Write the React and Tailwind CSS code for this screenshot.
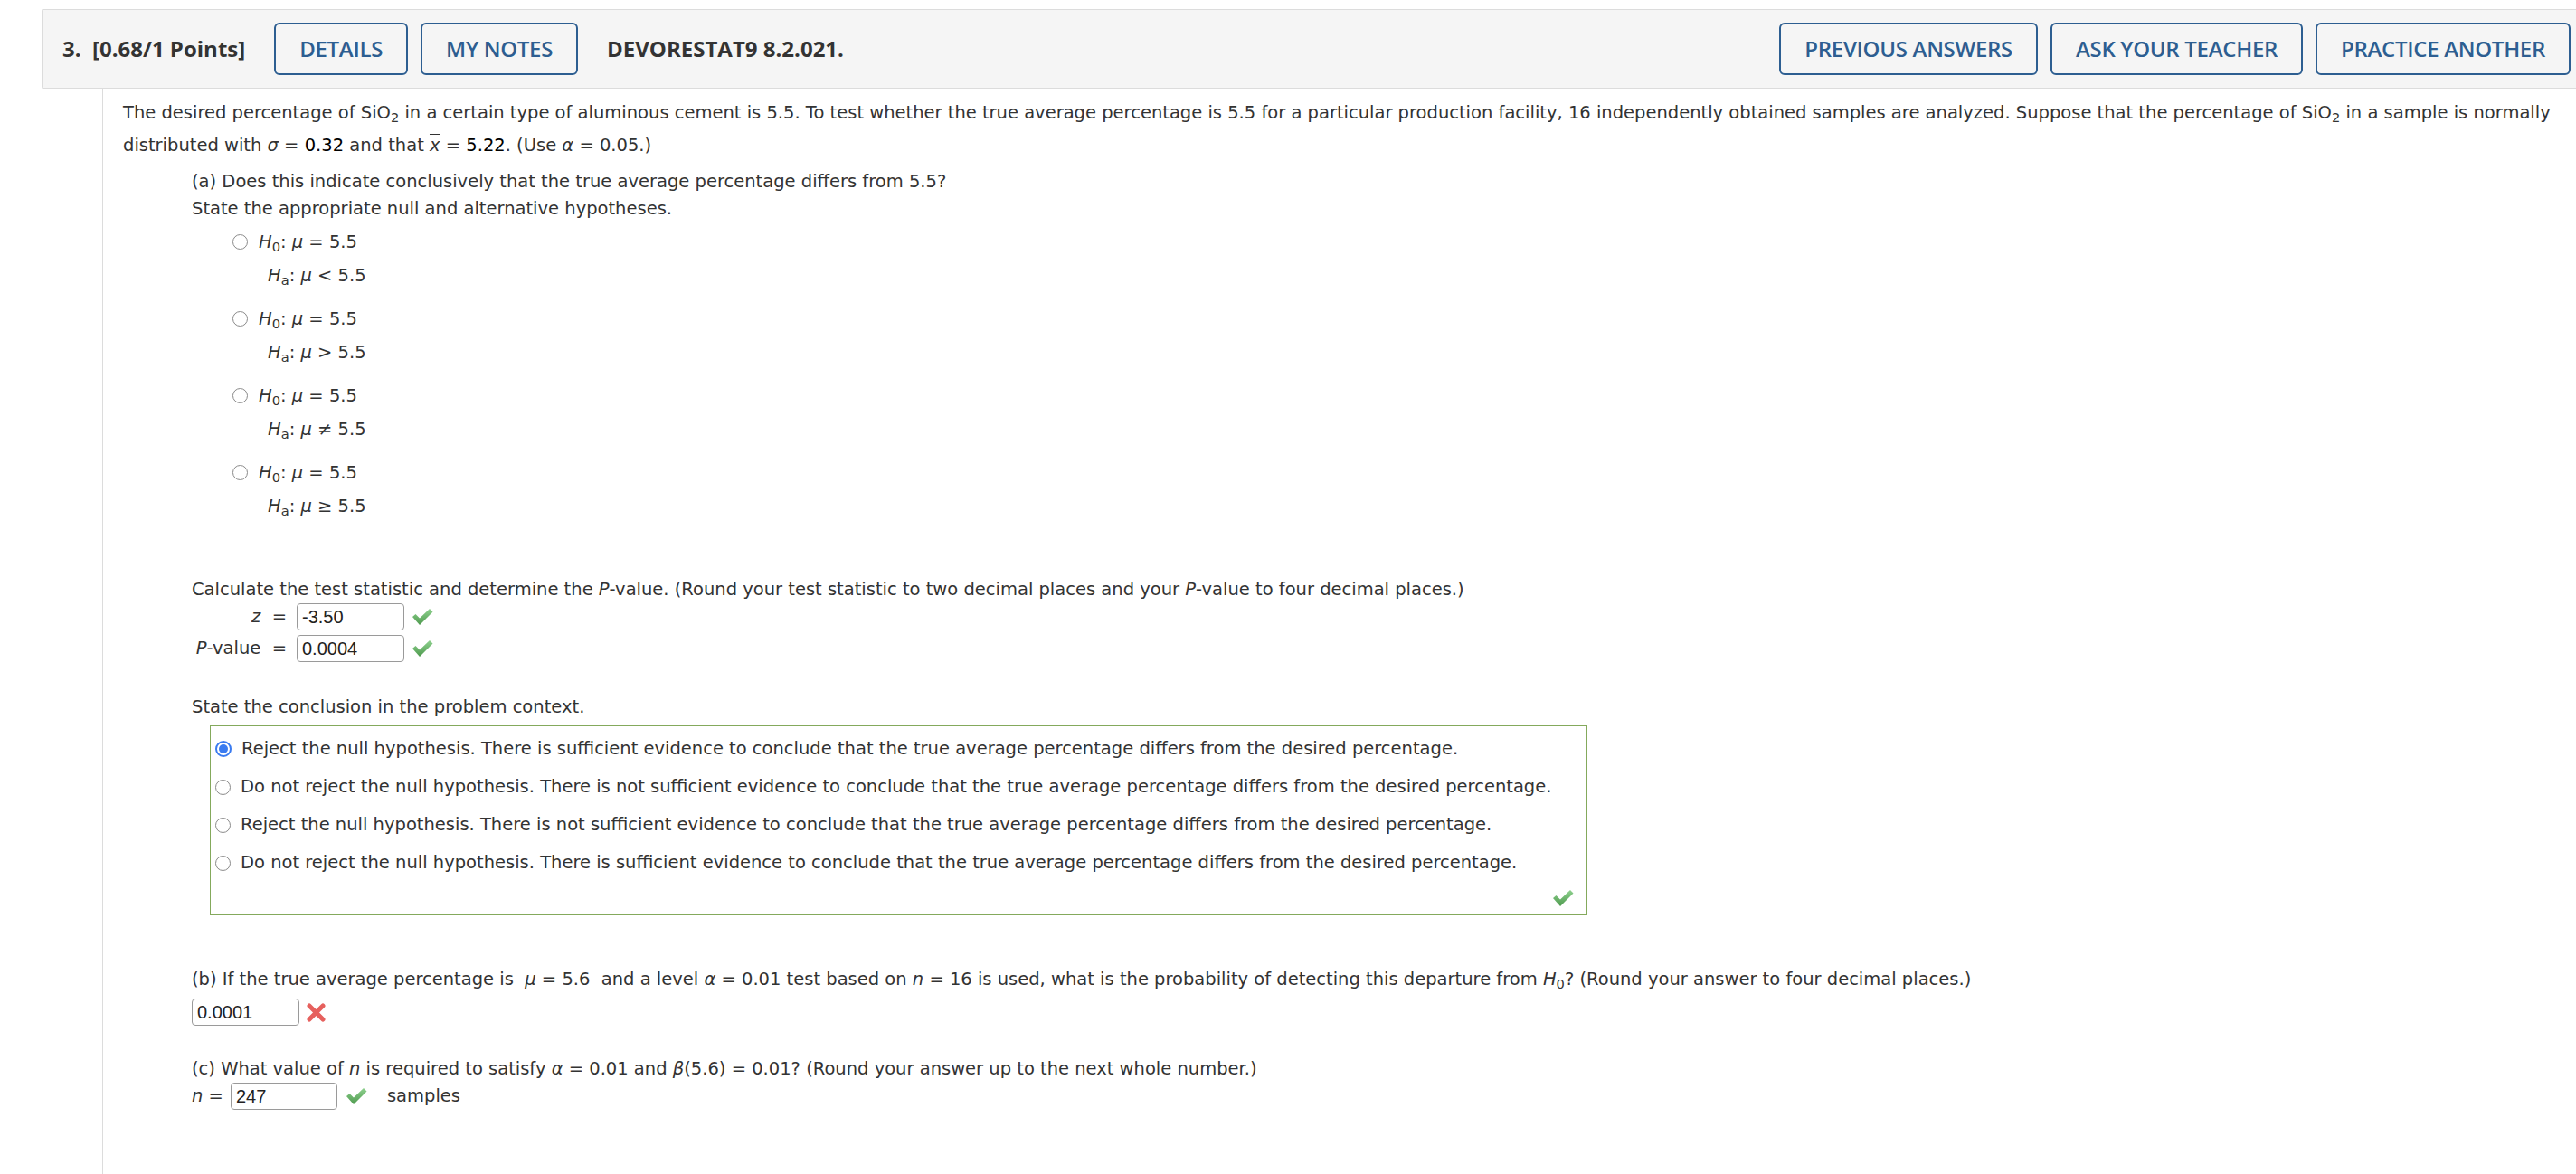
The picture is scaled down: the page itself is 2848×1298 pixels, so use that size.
import React from "react";

// header buttons share one look
function HeadButton({ children }) {
  return (
    <button className="h-[58px] px-[26px] border-2 border-[#2d5e91] rounded-[6px] text-[#2d5e91] text-[24px] font-semibold tracking-[-0.3px]">
      {children}
    </button>
  );
}

function Check() {
  return (
    <svg width="24" height="20" viewBox="0 0 24 20" className="shrink-0">
      <defs>
        <linearGradient id="chk" x1="0" y1="0" x2="0" y2="1">
          <stop offset="0" stopColor="#8fd18f" />
          <stop offset="1" stopColor="#4e9a4e" />
        </linearGradient>
      </defs>
      <polygon points="1,10 4.5,7 9,11.5 20,1 23.5,4.5 9,19" fill="url(#chk)" />
    </svg>
  );
}

function Cross() {
  return (
    <svg width="21" height="21" viewBox="0 0 21 21" className="shrink-0">
      <path d="M3 3 L18 18 M18 3 L3 18" stroke="#e6605d" strokeWidth="5" strokeLinecap="round" />
    </svg>
  );
}

function Radio({ checked }) {
  if (checked) {
    return (
      <span className="w-[18px] h-[18px] rounded-full border-2 border-[#3a7bf0] flex items-center justify-center shrink-0">
        <span className="w-[10px] h-[10px] rounded-full bg-[#3a7bf0]"></span>
      </span>
    );
  }
  return <span className="w-[17px] h-[17px] rounded-full border-[1.5px] border-[#8a8a8a] bg-white shrink-0"></span>;
}

function Answer({ value, w = "w-[119px]" }) {
  return (
    <div className={`${w} h-[30px] border border-[#9a9a9a] rounded-[4px] bg-white flex items-center pl-[5px] text-[20px] text-[#222] font-['Liberation_Sans',Arial,sans-serif]`}>
      {value}
    </div>
  );
}

const hypotheses = ["<", ">", "≠", "≥"];

const conclusions = [
  "Reject the null hypothesis. There is sufficient evidence to conclude that the true average percentage differs from the desired percentage.",
  "Do not reject the null hypothesis. There is not sufficient evidence to conclude that the true average percentage differs from the desired percentage.",
  "Reject the null hypothesis. There is not sufficient evidence to conclude that the true average percentage differs from the desired percentage.",
  "Do not reject the null hypothesis. There is sufficient evidence to conclude that the true average percentage differs from the desired percentage.",
];

export default function App() {
  return (
    <div className="min-h-[1298px] bg-white pt-[10px] text-[#333]">
      <header className="ml-[46px] h-[88px] bg-[#f5f5f5] border-y border-l border-[#dcdcdc] rounded-l-[2px] flex items-center pl-[22px] pr-[6px] font-['Open_Sans',sans-serif]">
        <span className="text-[24px] font-bold text-[#333]">3.&nbsp; [0.68/1 Points]</span>
        <div className="ml-[32px] flex gap-[14px]">
          <HeadButton>DETAILS</HeadButton>
          <HeadButton>MY NOTES</HeadButton>
        </div>
        <span className="ml-[32px] text-[24px] font-bold text-[#333]">DEVORESTAT9 8.2.021.</span>
        <div className="ml-auto flex gap-[14px]">
          <HeadButton>PREVIOUS ANSWERS</HeadButton>
          <HeadButton>ASK YOUR TEACHER</HeadButton>
          <HeadButton>PRACTICE ANOTHER</HeadButton>
        </div>
      </header>

      <main className="ml-[113px] border-l border-[#dcdcdc] min-h-[1200px] pl-[22px] pr-[14px] pt-[9px] text-[19.5px] font-['DejaVu_Sans',Verdana,sans-serif]">
        <p className="leading-[36px]">
          The desired percentage of SiO<sub>2</sub> in a certain type of aluminous cement is 5.5. To test whether the true
          average percentage is 5.5 for a particular production facility, 16 independently obtained samples are analyzed.
          Suppose that the percentage of SiO<sub>2</sub> in a sample is normally distributed with <i>σ</i> ={" "}
          <span className="text-black">0.32</span> and that <i className="overline">x</i> ={" "}
          <span className="text-black">5.22</span>. (Use <i>α</i> = 0.05.)
        </p>

        <div className="ml-[76px] mt-[7px]">
          <p className="leading-[30px]">(a) Does this indicate conclusively that the true average percentage differs from 5.5?</p>
          <p className="leading-[30px]">State the appropriate null and alternative hypotheses.</p>

          <div className="mt-[3px] ml-[45px] flex flex-col gap-[11px]">
            {hypotheses.map((sign) => (
              <div key={sign}>
                <div className="flex items-center h-[37px]">
                  <Radio />
                  <span className="ml-[12px]">
                    <i>H</i>
                    <sub>0</sub>: <i>μ</i> = 5.5
                  </span>
                </div>
                <div className="h-[37px] flex items-center pl-[39px]">
                  <span>
                    <i>H</i>
                    <sub>a</sub>: <i>μ</i> {sign} 5.5
                  </span>
                </div>
              </div>
            ))}
          </div>

          <p className="leading-[30px] mt-[59px]">
            Calculate the test statistic and determine the <i>P</i>-value. (Round your test statistic to two decimal places
            and your <i>P</i>-value to four decimal places.)
          </p>
          <div className="flex flex-col gap-[5px]">
            <div className="flex items-center">
              <span className="w-[105px] text-right">
                <i>z</i>&nbsp; =
              </span>
              <div className="ml-[11px]">
                <Answer value="-3.50" />
              </div>
              <div className="ml-[8px]">
                <Check />
              </div>
            </div>
            <div className="flex items-center">
              <span className="w-[105px] text-right">
                <i>P</i>-value&nbsp; =
              </span>
              <div className="ml-[11px]">
                <Answer value="0.0004" />
              </div>
              <div className="ml-[8px]">
                <Check />
              </div>
            </div>
          </div>

          <p className="leading-[30px] mt-[35px]">State the conclusion in the problem context.</p>
          <div className="ml-[20px] mt-[5px] w-[1523px] border border-[#84a95c] pt-[4px] pb-[8px]">
            {conclusions.map((text, i) => (
              <div key={i} className="h-[42px] flex items-center pl-[5px]">
                <Radio checked={i === 0} />
                <span className="ml-[11px]">{text}</span>
              </div>
            ))}
            <div className="h-[28px] flex justify-end items-end pr-[14px]">
              <Check />
            </div>
          </div>

          <p className="leading-[30px] mt-[56px]">
            (b) If the true average percentage is&nbsp; <i>μ</i> = 5.6&nbsp; and a level <i>α</i> = 0.01 test based on{" "}
            <i>n</i> = 16 is used, what is the probability of detecting this departure from <i>H</i>
            <sub>0</sub>? (Round your answer to four decimal places.)
          </p>
          <div className="flex items-center mt-[6px]">
            <Answer value="0.0001" />
            <div className="ml-[8px]">
              <Cross />
            </div>
          </div>

          <p className="leading-[30px] mt-[33px]">
            (c) What value of <i>n</i> is required to satisfy <i>α</i> = 0.01 and <i>β</i>(5.6) = 0.01? (Round your answer
            up to the next whole number.)
          </p>
          <div className="flex items-center">
            <span>
              <i>n</i> =
            </span>
            <div className="ml-[8px]">
              <Answer value="247" w="w-[118px]" />
            </div>
            <div className="ml-[9px]">
              <Check />
            </div>
            <span className="ml-[22px]">samples</span>
          </div>
        </div>
      </main>
    </div>
  );
}
